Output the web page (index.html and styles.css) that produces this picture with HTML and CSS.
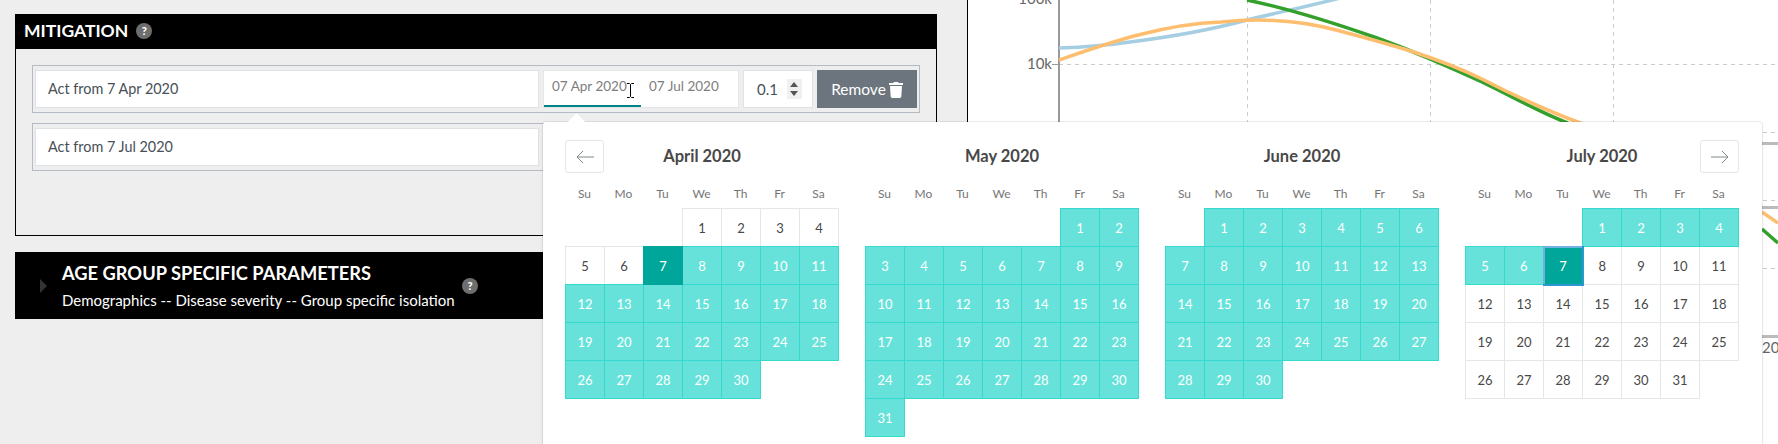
FILE: index.html
```html
<!DOCTYPE html>
<html>
<head>
    <link rel="stylesheet" href="styles.css">
</head>
<body>
    <div class="page">
        <div class="left-col">
            <div class="panel">
                <div class="panel-head">
                    <h2 class="mitigation-title">MITIGATION</h2>
                    <span class="help">?</span>
                </div>
                <div class="panel-body">
                    <div class="act-row">
                        <div class="field act-name">Act from 7 Apr 2020</div>
                        <div class="field date-range">
                            <span class="date-input active">07 Apr 2020</span>
                            <span class="date-input">07 Jul 2020</span>
                        </div>
                        <div class="field act-value">
                            <span>0.1</span>
                            <span class="spinner"><i class="up"></i><i class="down"></i></span>
                        </div>
                        <button class="remove-btn">Remove
                            <svg class="trash" viewBox="0 0 448 512"><path d="M432 32H312l-9.4-18.7A24 24 0 0 0 281.1 0H166.8a23.72 23.72 0 0 0-21.4 13.3L136 32H16A16 16 0 0 0 0 48v32a16 16 0 0 0 16 16h416a16 16 0 0 0 16-16V48a16 16 0 0 0-16-16zM53.2 467a48 48 0 0 0 47.9 45h245.8a48 48 0 0 0 47.9-45L416 128H32z"/></svg>
                        </button>
                    </div>
                    <div class="act-row">
                        <div class="field act-name">Act from 7 Jul 2020</div>
                    </div>
                </div>
            </div>

            <div class="age-bar">
                <span class="age-arrow"></span>
                <div class="age-text">
                    <h2>AGE GROUP SPECIFIC PARAMETERS</h2>
                    <div class="age-sub">Demographics -- Disease severity -- Group specific isolation</div>
                </div>
                <span class="help">?</span>
            </div>
        </div>

        <div class="chart">
            <svg class="chart-svg" viewBox="968 0 810 444">
                <g class="grid">
                    <path d="M1247.5 0V444M1430.5 0V444M1613.5 0V444"/>
                    <path d="M1059 64.5H1778M1059 132.5H1778M1059 200.5H1778M1059 268.5H1778"/>
                </g>
                <g class="axis">
                    <path d="M1059 0V444"/>
                    <path class="tick" d="M1052 64.5H1059"/>
                    <text x="1052" y="4" text-anchor="end">100k</text>
                    <text x="1052" y="69" text-anchor="end">10k</text>
                    <text x="1762" y="353">2020</text>
                </g>
                <path class="band" d="M1762 143.5H1778M1762 207.5H1778M1762 336.5H1778"/>
                <path class="curve blue" d="M1059 48C1090 47 1110 45 1130 42C1170 37 1210 30 1247 20C1280 12 1310 6 1340 -2"/>
                <path class="curve green" d="M1247 0C1290 9 1340 25 1377 38C1410 50 1450 67 1482 82C1515 98 1545 115 1568 123M1762 229L1778 243"/>
                <path class="curve orange" d="M1059 60C1100 46 1160 24 1221 22C1260 18 1300 20 1340 31C1380 42 1430 54 1482 79C1515 96 1550 112 1583 124M1762 212L1778 223"/>
            </svg>
        </div>
    </div>

    <div class="picker">
        <span class="picker-caret"></span>
        <button class="nav-btn nav-prev"><svg viewBox="0 0 18 14"><path d="M18 7H1M7 1L1 7L7 13"/></svg></button>
        <button class="nav-btn nav-next"><svg viewBox="0 0 18 14"><path d="M0 7H17M11 1L17 7L11 13"/></svg></button>

        <div class="month">
            <div class="month-title">April 2020</div>
            <div class="weekdays"><span>Su</span><span>Mo</span><span>Tu</span><span>We</span><span>Th</span><span>Fr</span><span>Sa</span></div>
            <table>
                <tr><td class="blank"></td><td class="blank"></td><td class="blank"></td><td>1</td><td>2</td><td>3</td><td>4</td></tr>
                <tr><td>5</td><td>6</td><td class="start">7</td><td class="span">8</td><td class="span">9</td><td class="span">10</td><td class="span">11</td></tr>
                <tr><td class="span">12</td><td class="span">13</td><td class="span">14</td><td class="span">15</td><td class="span">16</td><td class="span">17</td><td class="span">18</td></tr>
                <tr><td class="span">19</td><td class="span">20</td><td class="span">21</td><td class="span">22</td><td class="span">23</td><td class="span">24</td><td class="span">25</td></tr>
                <tr><td class="span">26</td><td class="span">27</td><td class="span">28</td><td class="span">29</td><td class="span">30</td><td class="blank"></td><td class="blank"></td></tr>
            </table>
        </div>

        <div class="month">
            <div class="month-title">May 2020</div>
            <div class="weekdays"><span>Su</span><span>Mo</span><span>Tu</span><span>We</span><span>Th</span><span>Fr</span><span>Sa</span></div>
            <table>
                <tr><td class="blank"></td><td class="blank"></td><td class="blank"></td><td class="blank"></td><td class="blank"></td><td class="span">1</td><td class="span">2</td></tr>
                <tr><td class="span">3</td><td class="span">4</td><td class="span">5</td><td class="span">6</td><td class="span">7</td><td class="span">8</td><td class="span">9</td></tr>
                <tr><td class="span">10</td><td class="span">11</td><td class="span">12</td><td class="span">13</td><td class="span">14</td><td class="span">15</td><td class="span">16</td></tr>
                <tr><td class="span">17</td><td class="span">18</td><td class="span">19</td><td class="span">20</td><td class="span">21</td><td class="span">22</td><td class="span">23</td></tr>
                <tr><td class="span">24</td><td class="span">25</td><td class="span">26</td><td class="span">27</td><td class="span">28</td><td class="span">29</td><td class="span">30</td></tr>
                <tr><td class="span">31</td><td class="blank"></td><td class="blank"></td><td class="blank"></td><td class="blank"></td><td class="blank"></td><td class="blank"></td></tr>
            </table>
        </div>

        <div class="month">
            <div class="month-title">June 2020</div>
            <div class="weekdays"><span>Su</span><span>Mo</span><span>Tu</span><span>We</span><span>Th</span><span>Fr</span><span>Sa</span></div>
            <table>
                <tr><td class="blank"></td><td class="span">1</td><td class="span">2</td><td class="span">3</td><td class="span">4</td><td class="span">5</td><td class="span">6</td></tr>
                <tr><td class="span">7</td><td class="span">8</td><td class="span">9</td><td class="span">10</td><td class="span">11</td><td class="span">12</td><td class="span">13</td></tr>
                <tr><td class="span">14</td><td class="span">15</td><td class="span">16</td><td class="span">17</td><td class="span">18</td><td class="span">19</td><td class="span">20</td></tr>
                <tr><td class="span">21</td><td class="span">22</td><td class="span">23</td><td class="span">24</td><td class="span">25</td><td class="span">26</td><td class="span">27</td></tr>
                <tr><td class="span">28</td><td class="span">29</td><td class="span">30</td><td class="blank"></td><td class="blank"></td><td class="blank"></td><td class="blank"></td></tr>
            </table>
        </div>

        <div class="month">
            <div class="month-title">July 2020</div>
            <div class="weekdays"><span>Su</span><span>Mo</span><span>Tu</span><span>We</span><span>Th</span><span>Fr</span><span>Sa</span></div>
            <table>
                <tr><td class="blank"></td><td class="blank"></td><td class="blank"></td><td class="span">1</td><td class="span">2</td><td class="span">3</td><td class="span">4</td></tr>
                <tr><td class="span">5</td><td class="span">6</td><td class="end">7</td><td>8</td><td>9</td><td>10</td><td>11</td></tr>
                <tr><td>12</td><td>13</td><td>14</td><td>15</td><td>16</td><td>17</td><td>18</td></tr>
                <tr><td>19</td><td>20</td><td>21</td><td>22</td><td>23</td><td>24</td><td>25</td></tr>
                <tr><td>26</td><td>27</td><td>28</td><td>29</td><td>30</td><td>31</td><td class="blank"></td></tr>
            </table>
        </div>
    </div>

    <svg class="cursor" viewBox="0 0 9 15"><path d="M1 .5H3.5L4.5 1.5L5.5 .5H8M4.5 1.5V13.5M1 14.5H3.5L4.5 13.5L5.5 14.5H8"/></svg>
</body>
</html>
```

FILE: styles.css
```css
* {
    box-sizing: border-box;
}

body {
    font-family: Lato, "Noto Sans", sans-serif;
    background-color: #eee;
    margin: 0;
    height: 444px;
    overflow: hidden;
    color: #484848;
}

.page {
    display: flex;
    height: 444px;
}

.left-col {
    width: 967px;
    padding: 14px 30px 0 15px;
}

.panel {
    height: 222px;
    border: 1px solid #000;
    border-top: none;
}

.panel-head {
    display: flex;
    align-items: center;
    gap: 8px;
    height: 35px;
    margin: 0 -1px;
    padding: 0 0 2px 9px;
    background: #000;
    color: white;
}

h2 {
    margin: 0;
    font-size: 18.3px;
    font-weight: 700;
    line-height: 22px;
}

.mitigation-title {
    font-size: 17.5px;
}

.help {
    display: flex;
    align-items: center;
    justify-content: center;
    width: 16px;
    height: 16px;
    border-radius: 50%;
    background: #6e6e6e;
    color: white;
    font-size: 11px;
    font-weight: 900;
}

.panel-body {
    display: flex;
    flex-direction: column;
    gap: 10px;
    padding: 16px 16px 0;
}

.act-row {
    display: flex;
    gap: 4px;
    height: 48px;
    padding: 4px 2px;
    border: 1px solid #b4bbc2;
}

.field {
    display: flex;
    align-items: center;
    height: 38px;
    padding-bottom: 2px;
    background: white;
    border: 1px solid #dee2e6;
    font-size: 14.4px;
    color: #495057;
}

.act-name {
    width: 504px;
    padding-left: 12px;
}

.date-range {
    width: 196px;
    padding-bottom: 0;
    border-color: #e4e7e7;
}

.date-input {
    display: block;
    width: 97px;
    height: 36px;
    padding: 7px 8px 0;
    font-size: 13.5px;
    color: #7d7d7d;
    white-space: nowrap;
}

.date-input.active {
    border-bottom: 2px solid #008489;
}

.act-value {
    width: 70px;
    padding-left: 13px;
    padding-bottom: 0;
    gap: 9px;
    font-size: 15px;
}

.spinner {
    display: flex;
    flex-direction: column;
    justify-content: center;
    align-items: center;
    gap: 4px;
    width: 15px;
    height: 20px;
    background: #f0f0f0;
}

.spinner i {
    display: block;
    border-left: 4px solid transparent;
    border-right: 4px solid transparent;
}

.spinner .up {
    border-bottom: 5px solid #555;
}

.spinner .down {
    border-top: 5px solid #555;
}

.remove-btn {
    display: flex;
    align-items: center;
    justify-content: center;
    gap: 3px;
    width: 100px;
    height: 38px;
    padding: 0;
    background-color: #6c757d;
    border: 1px solid #6c757d;
    font-family: inherit;
    font-size: 15.5px;
    color: white;
}

.trash {
    width: 14px;
    height: 16px;
    margin-top: 2px;
    fill: white;
}

.age-bar {
    display: flex;
    align-items: center;
    height: 67px;
    margin-top: 16px;
    padding-left: 25px;
    background: #000;
    color: white;
}

.age-arrow {
    width: 0;
    height: 0;
    border-top: 7px solid transparent;
    border-bottom: 7px solid transparent;
    border-left: 7px solid #333;
}

.age-text {
    margin-left: 15px;
    width: 400px;
}

.age-sub {
    margin-top: 6px;
    font-size: 15px;
    line-height: 20px;
}

.chart {
    flex: 1;
    background: white;
    border-left: 1px solid #000;
}

.chart-svg {
    display: block;
    width: 810px;
    height: 444px;
}

.grid path {
    fill: none;
    stroke: #ccc;
    stroke-dasharray: 4 4;
}

.axis path {
    fill: none;
    stroke: #999;
    stroke-width: 2;
}

.axis .tick {
    stroke-width: 1;
}

.axis text {
    font-size: 15px;
    fill: #666;
}

.band {
    fill: none;
    stroke: #bbb;
    stroke-width: 3;
}

.curve {
    fill: none;
    stroke-width: 3.5;
}

.blue {
    stroke: #a6cee3;
}

.green {
    stroke: #33a02c;
}

.orange {
    stroke: #fdbf6f;
}

.picker {
    position: absolute;
    left: 543px;
    top: 122px;
    display: flex;
    gap: 26px;
    width: 1219px;
    height: 340px;
    padding-left: 22px;
    background: white;
    border-radius: 3px;
    box-shadow: 0 2px 6px rgba(0,0,0,0.05), 0 0 0 1px rgba(0,0,0,0.07);
}

.picker-caret {
    position: absolute;
    left: 27px;
    top: -6px;
    width: 13px;
    height: 13px;
    background: white;
    transform: rotate(45deg);
}

.nav-btn {
    position: absolute;
    top: 18px;
    width: 39px;
    height: 33px;
    padding: 0;
    background: white;
    border: 1px solid #e4e7e7;
    border-radius: 3px;
}

.nav-btn svg {
    display: block;
    width: 18px;
    height: 14px;
    margin: 0 auto;
    fill: none;
    stroke: #82888a;
    stroke-width: 1;
}

.nav-prev {
    left: 22px;
}

.nav-next {
    right: 23px;
}

.month {
    width: 274px;
}

.month-title {
    padding-top: 22px;
    font-size: 16.5px;
    font-weight: 700;
    line-height: 25px;
    text-align: center;
}

.weekdays {
    display: grid;
    grid-template-columns: repeat(7, 39px);
    margin-top: 15px;
    height: 24px;
    font-size: 12px;
    line-height: 20px;
    text-align: center;
    color: #757575;
}

table {
    border-collapse: collapse;
    table-layout: fixed;
    width: 274px;
}

td {
    width: 39px;
    height: 38px;
    padding: 0;
    border: 1px solid #e4e7e7;
    font-size: 13px;
    text-align: center;
    color: #484848;
}

td.blank {
    border: none;
}

td.span {
    background: #66e2da;
    border: 1px double #33dacd;
    color: white;
}

td.start {
    background: #00a699;
    border: 1px double #00a699;
    color: white;
}

td.end {
    background: #00a699;
    border: 2px double #2d97cf;
    border-left-color: #6fb2e2;
    border-top-color: #6fb2e2;
    color: white;
}

.cursor {
    position: absolute;
    left: 626px;
    top: 83px;
    width: 9px;
    height: 15px;
    fill: none;
    stroke: #000;
    stroke-width: 1;
}
```
